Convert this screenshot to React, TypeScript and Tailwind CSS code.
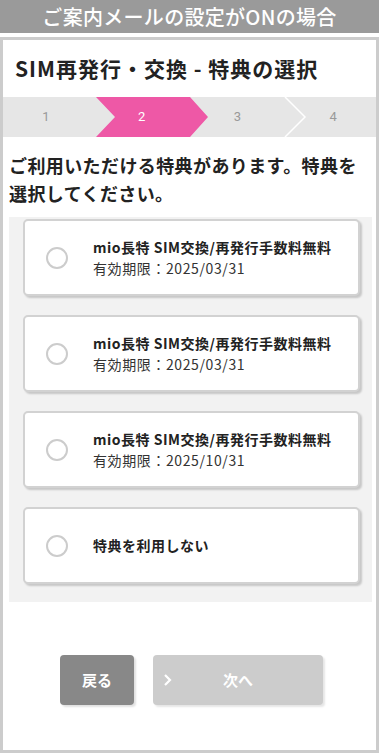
const jp = { fontFamily: '"Noto Sans CJK JP", "Noto Sans", sans-serif' };

const benefits = [
  { title: "mio長特 SIM交換/再発行手数料無料", until: "2025/03/31" },
  { title: "mio長特 SIM交換/再発行手数料無料", until: "2025/03/31" },
  { title: "mio長特 SIM交換/再発行手数料無料", until: "2025/10/31" },
];

function Stepper() {
  const steps = ["1", "2", "3", "4"];
  return (
    <div className="relative h-[40px] bg-[#e6e6e6]">
      <svg className="absolute inset-0" width="373" height="40" viewBox="0 0 373 40">
        <polygon points="93,0 187,0 205,20 187,40 93,40 112,20" fill="#ee58a6" />
        <polyline points="282,0 302,20 282,40" fill="none" stroke="#ffffff" strokeWidth="1.5" />
      </svg>
      <div className="relative flex h-full">
        {steps.map((s, i) => (
          <div
            key={s}
            className={`flex-1 flex items-center justify-center text-[13px] ${i === 1 ? "text-white pl-[8px]" : i === 0 ? "text-[#999999] pr-[2px]" : "text-[#999999] pl-[10px]"}`}
            style={{ fontFamily: "Roboto, sans-serif" }}
          >
            {s}
          </div>
        ))}
      </div>
    </div>
  );
}

function Radio() {
  return <span className="w-[22px] h-[22px] rounded-full border-2 border-[#cccccc] bg-white shrink-0" />;
}

function Card({ children }: { children: React.ReactNode }) {
  return (
    <div className="h-[77px] bg-white border-2 border-[#d2d2d2] rounded-[5px] shadow-[2px_2px_2px_rgba(0,0,0,0.18)] flex items-center pl-[21px] gap-[25px] text-[#333333]">
      <Radio />
      <div className="flex flex-col">{children}</div>
    </div>
  );
}

export default function App() {
  return (
    <div className="w-[379px] h-[753px] bg-white flex flex-col" style={jp}>
      <div className="h-[33px] shrink-0 bg-[#9a9a9a] text-white text-[20px] font-medium tracking-[0.3px] flex items-center justify-center">
        ご案内メールの設定がONの場合
      </div>
      <div className="mt-[4px] flex-1 border-[3px] border-[#cccccc] flex flex-col">
        <div className="h-[57px] shrink-0 px-[12px] flex items-center text-[21px] font-bold tracking-[1px] text-[#222222]">
          SIM再発行・交換 - 特典の選択
        </div>
        <Stepper />
        <div className="h-[80px] shrink-0 pt-[14px] px-[6px] text-[18px] font-bold leading-[28px] tracking-[0.4px] text-[#222222]">
          ご利用いただける特典があります。特典を
          <br />
          選択してください。
        </div>
        <div className="ml-[6px] mr-[4px] bg-[#f2f2f2] pt-[2px] pb-[18px] pl-[14px] pr-[12px] flex flex-col gap-[19px]">
          {benefits.map((b, i) => (
            <Card key={i}>
              <span className="text-[14px] font-bold leading-[21px] tracking-[0.5px] text-[#222222]">{b.title}</span>
              <span className="text-[14px] leading-[21px] tracking-[0.6px]">有効期限：{b.until}</span>
            </Card>
          ))}
          <Card>
            <span className="text-[14px] font-bold tracking-[0.5px] text-[#222222]">特典を利用しない</span>
          </Card>
        </div>
        <div className="mt-[53px] flex gap-[19px] pl-[57px]">
          <button className="w-[74px] h-[50px] rounded-[4px] bg-[#888888] text-white text-[15px] font-bold shadow-[2px_2px_2px_rgba(0,0,0,0.12)]">
            戻る
          </button>
          <button className="relative w-[170px] h-[50px] rounded-[4px] bg-[#cccccc] text-white text-[15px] font-bold shadow-[2px_2px_2px_rgba(0,0,0,0.1)] flex items-center justify-center">
            <svg className="absolute left-[10px] top-[18px]" width="10" height="14" viewBox="0 0 10 14">
              <polyline points="2,2 7,7 2,12" fill="none" stroke="#ffffff" strokeWidth="2.2" />
            </svg>
            次へ
          </button>
        </div>
      </div>
    </div>
  );
}
